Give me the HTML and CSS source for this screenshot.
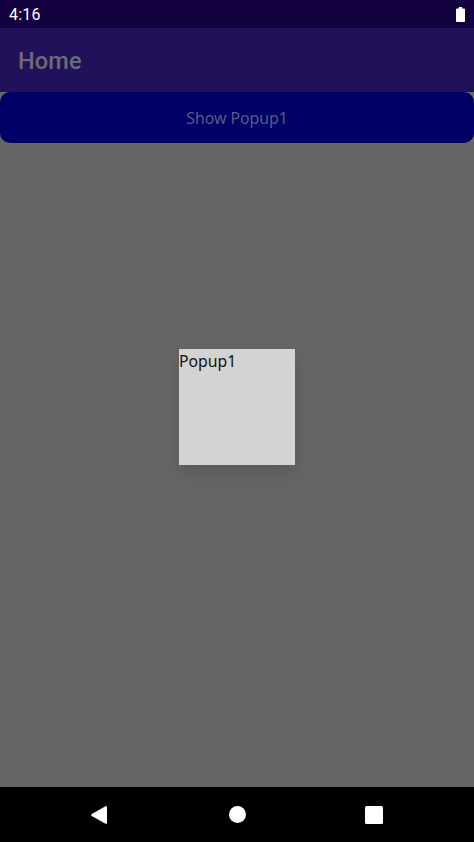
FILE: index.html
```html
<!DOCTYPE html>
<html lang="en">
<head>
<meta charset="utf-8">
<title>Home</title>
<link rel="stylesheet" href="styles.css">
</head>
<body>
<div class="screen">
  <div class="status-bar">
    <span class="time">4:16</span>
    <svg class="battery" width="9" height="15" viewBox="0 0 9 15"><path d="M2.8 0h3.4v1.6h1.9a.9.9 0 0 1 .9.9v11.6a.9.9 0 0 1-.9.9H.9a.9.9 0 0 1-.9-.9V2.500a.9.9 0 0 1 .9-.9h1.900z" fill="#fff"/></svg>
  </div>
  <header class="app-bar"><span class="title">Home</span></header>
  <main class="content">
    <button class="show-button">Show Popup1</button>
    <div class="popup-area">
      <div class="popup">Popup1</div>
    </div>
  </main>
  <nav class="nav-bar">
    <svg class="nav-back" width="16" height="18" viewBox="0 0 16 18"><path d="M14.500 0.300 .8 8a1.100 1.100 0 0 0 0 2l13.700 7.700a1 1 0 0 0 1.500-.9V1.200a1 1 0 0 0-1.500-.9z" fill="#fff"/></svg>
    <svg class="nav-home" width="17" height="17" viewBox="0 0 17 17"><circle cx="8.500" cy="8.500" r="8.500" fill="#fff"/></svg>
    <svg class="nav-recent" width="18" height="18" viewBox="0 0 18 18"><rect width="18" height="18" rx="1.500" fill="#fff"/></svg>
  </nav>
</div>
</body>
</html>
```
FILE: styles.css
```css
* { box-sizing: border-box; }
html, body { margin: 0; padding: 0; }
body { width: 474px; height: 842px; overflow: hidden; font-family: "Noto Sans", "Open Sans", sans-serif; }
.screen { width: 474px; height: 842px; display: flex; flex-direction: column; background: #666666; }
.status-bar { height: 28px; background: #12003f; display: flex; align-items: center; justify-content: space-between; padding: 0 9px 0 9px; flex: none; }
.time { color: #fff; font-family: Roboto, sans-serif; font-size: 16px; letter-spacing: 0.2px; }
.app-bar { height: 64px; background: #21115a; display: flex; align-items: center; padding: 2px 18px 0; flex: none; }
.title { color: #6e6a76; font-family: Roboto, sans-serif; font-weight: 500; font-size: 23.5px; letter-spacing: 0.15px; }
.content { flex: 1; display: flex; flex-direction: column; background: #666666; min-height: 0; }
.show-button { height: 51px; flex: none; width: 100%; border: 0; border-radius: 10px; background: #000066; color: #5a5a85; font-family: "Noto Sans", sans-serif; font-size: 15.8px; padding: 0; }
.popup-area { flex: 1; display: flex; justify-content: center; padding-top: 206px; }
.popup { width: 116px; height: 116px; background: #d3d3d3; color: #111; font-size: 15.8px; line-height: 24px; box-shadow: 0 8px 20px rgba(0,0,0,0.14); }
.nav-bar { height: 55px; background: #000; flex: none; display: flex; align-items: center; padding: 0 0 0 91px; }
.nav-home { margin: 0 119px 0 122px; }
```
